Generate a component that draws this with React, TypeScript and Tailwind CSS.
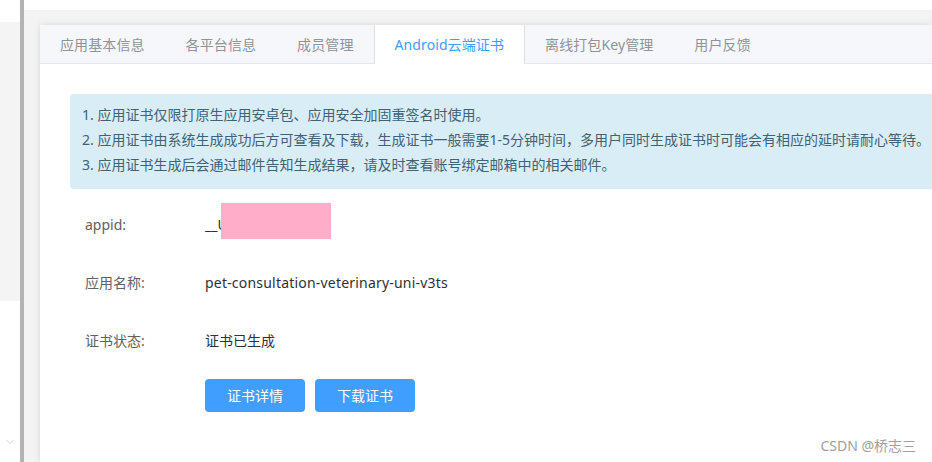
import React from "react";
import { ChevronDown } from "lucide-react";

const tabs = ["应用基本信息", "各平台信息", "成员管理", "Android云端证书", "离线打包Key管理", "用户反馈"];
const activeTab = 3;

const notices = [
  "1. 应用证书仅限打原生应用安卓包、应用安全加固重签名时使用。",
  "2. 应用证书由系统生成成功后方可查看及下载，生成证书一般需要1-5分钟时间，多用户同时生成证书时可能会有相应的延时请耐心等待。",
  "3. 应用证书生成后会通过邮件告知生成结果，请及时查看账号绑定邮箱中的相关邮件。",
];

const App = () => {
  return (
    <div
      className="flex h-[462px] w-[932px] overflow-hidden bg-white"
      style={{ fontFamily: '"Noto Sans", "Noto Sans CJK SC", sans-serif' }}
    >
      {/* Left side menu */}
      <div className="flex w-[20px] shrink-0 flex-col">
        <div className="h-[22px] bg-white" />
        <div className="h-[279px] bg-[#f4f4f4]" />
        <div className="flex flex-1 items-end justify-center bg-white pb-[14px]">
          <ChevronDown size={12} className="text-[#a8c4dc]" strokeWidth={1.5} />
        </div>
      </div>
      <div className="w-[4px] shrink-0 bg-[#b3b3b3]" />

      {/* Main */}
      <div className="flex flex-1 flex-col bg-[#f3f3f3]">
        <div className="h-[10px] bg-white" />
        <div className="flex flex-1 pl-[16px] pt-[15px]">
          <div className="relative flex flex-1 flex-col bg-white shadow-[0_0_6px_rgba(0,0,0,0.12)]">
            {/* Tabs */}
            <div className="flex h-[39px] border-b border-[#e4e7ed] bg-[#f5f7fa]">
              {tabs.map((t, i) => (
                <div
                  key={t}
                  className={
                    i === activeTab
                      ? "-mb-px -ml-px flex h-[39px] items-center border-x border-[#dcdfe6] bg-white px-[20px] text-[14px] tracking-[0.1px] text-[#409eff]"
                      : "-ml-px flex h-[38px] items-center border-x border-transparent px-[20px] text-[14px] tracking-[0.1px] text-[#909399]"
                  }
                >
                  {t}
                </div>
              ))}
            </div>

            <div className="pl-[30px] pt-[30px]">
              {/* Notice */}
              <div className="flex flex-col rounded-l-[4px] bg-[#d9edf7] pb-[12px] pl-[12px] pt-[8px] text-[14px] leading-[25px] text-[#3f6275]">
                {notices.map((n) => (
                  <div key={n} className="whitespace-nowrap">
                    {n}
                  </div>
                ))}
              </div>

              {/* Form */}
              <div className="flex flex-col pl-[15px] pt-[13px] text-[14px]">
                <div className="flex h-[44px] items-center">
                  <div className="w-[120px] text-[#606266]">appid:</div>
                  <div className="flex items-center text-[#303133]">
                    <span>__U</span>
                    <span className="-ml-[7px] mb-[6px] h-[36px] w-[110px] bg-[#ffadc8]" />
                  </div>
                </div>
                <div className="mt-[14px] flex h-[44px] items-center">
                  <div className="w-[120px] text-[#606266]">应用名称:</div>
                  <div className="tracking-[0.2px] text-[#303133]">pet-consultation-veterinary-uni-v3ts</div>
                </div>
                <div className="mt-[14px] flex h-[44px] items-center">
                  <div className="w-[120px] text-[#606266]">证书状态:</div>
                  <div className="text-[#303133]">证书已生成</div>
                </div>
                <div className="mt-[17px] flex gap-[10px] pl-[120px]">
                  <button className="h-[33px] w-[100px] rounded-[4px] bg-[#409eff] text-[14px] text-white">
                    证书详情
                  </button>
                  <button className="h-[33px] w-[100px] rounded-[4px] bg-[#409eff] text-[14px] text-white">
                    下载证书
                  </button>
                </div>
              </div>
            </div>

            <div className="absolute bottom-[6px] right-[16px] text-[14px] text-[#a0a0a0]">CSDN @桥志三</div>
          </div>
        </div>
      </div>
    </div>
  );
};

export default App;
